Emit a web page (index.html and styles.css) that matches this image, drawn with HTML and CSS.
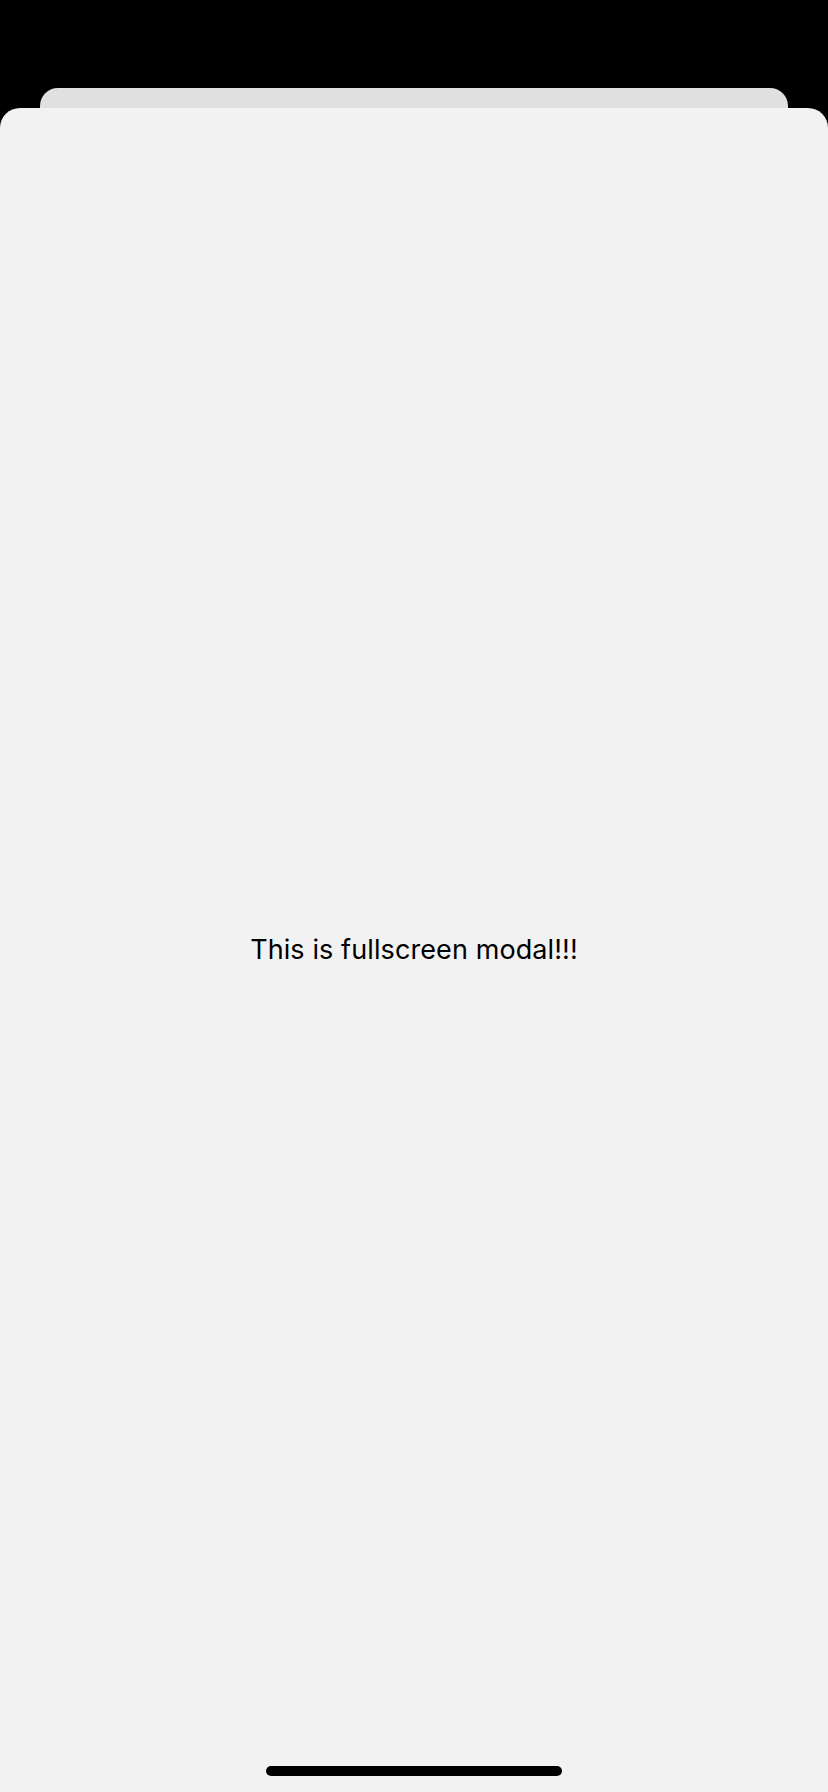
FILE: index.html
```html
<!DOCTYPE html>
<html lang="en">
<head>
  <meta charset="UTF-8">
  <meta name="viewport" content="width=device-width, initial-scale=1.0">
  <title>Fullscreen modal</title>
  <link rel="stylesheet" href="styles.css">
</head>
<body>
  <div class="screen">
    <!-- page underneath, pushed back by the modal -->
    <div class="back-card"></div>
    <div class="modal">
      <p class="modal-text">This is fullscreen modal!!!</p>
      <div class="home-indicator"></div>
    </div>
  </div>
</body>
</html>
```

FILE: styles.css
```css
/* Dark backdrop behind the stacked sheets */
body {
  margin: 0;
  background-color: #000;
  font-family: Inter, "Noto Sans", sans-serif;
}

.screen {
  display: flex;
  flex-direction: column;
  height: 1792px;
  padding-top: 88px;
  box-sizing: border-box;
  overflow: hidden;
}

.back-card {
  height: 40px;
  margin: 0 40px;
  background-color: #e0e0e0;
  border-radius: 18px 18px 0 0;
  flex-shrink: 0;
}

.modal {
  position: relative;
  flex: 1;
  margin-top: -20px;
  display: grid;
  grid-template-rows: 1fr auto 1fr;
  justify-items: center;
  background-color: #f2f2f2;
  border-radius: 20px 20px 0 0;
}

.modal-text {
  grid-row: 2;
  margin: 0;
  color: #000;
  font-size: 27px;
  line-height: 34px;
  letter-spacing: 0.1px;
}

.home-indicator {
  grid-row: 3;
  align-self: end;
  width: 296px;
  height: 10px;
  margin-bottom: 16px;
  background-color: #000;
  border-radius: 5px;
}
```
